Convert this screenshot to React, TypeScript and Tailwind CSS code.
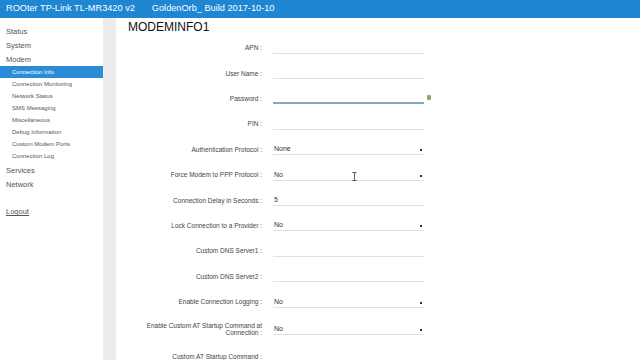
import React from "react";

type Row = { label: string; sub?: string; kind: "input" | "select" | "password"; value?: string; tall?: boolean };

const rows: Row[] = [
  { label: "APN :", kind: "input" },
  { label: "User Name :", kind: "input" },
  { label: "Password :", kind: "password" },
  { label: "PIN :", kind: "input" },
  { label: "Authentication Protocol :", kind: "select", value: "None" },
  { label: "Force Modem to PPP Protocol :", kind: "select", value: "No" },
  { label: "Connection Delay in Seconds :", kind: "input", value: "5" },
  { label: "Lock Connection to a Provider :", kind: "select", value: "No" },
  { label: "Custom DNS Server1 :", kind: "input" },
  { label: "Custom DNS Server2 :", kind: "input" },
  { label: "Enable Connection Logging :", kind: "select", value: "No" },
  { label: "Enable Custom AT Startup Command at", sub: "Connection :", kind: "select", value: "No", tall: true },
  { label: "Custom AT Startup Command :", kind: "input" },
];

const subs = [
  "Connection Info",
  "Connection Monitoring",
  "Network Status",
  "SMS Messaging",
  "Miscellaneous",
  "Debug Information",
  "Custom Modem Ports",
  "Connection Log",
];

export default function App() {
  return (
    <div
      className="w-[640px] h-[360px] overflow-hidden bg-white flex flex-col relative"
      style={{ fontFamily: '"Liberation Sans", Arial, sans-serif' }}
    >
      <div className="h-[18px] shrink-0 bg-[#1f86d4] flex items-center text-white text-[9.2px] pl-[6px]">
        <span>ROOter TP-Link TL-MR3420 v2</span>
        <span className="ml-[17px]">GoldenOrb_ Build 2017-10-10</span>
      </div>
      <div className="flex flex-1 min-h-0">
        <div className="w-[103px] shrink-0 pt-[7px] text-[#555]">
          <div className="h-[14px] flex items-center pl-[6px] text-[7.5px]">Status</div>
          <div className="h-[14px] flex items-center pl-[6px] text-[7.5px]">System</div>
          <div className="h-[13px] flex items-center pl-[6px] text-[7.5px]">Modem</div>
          {subs.map((t, i) => (
            <div
              key={t}
              className={
                "h-[12px] flex items-center pl-[12px] text-[6px] " +
                (i === 0 ? "bg-[#2a8bd6] text-white" : "text-[#555]")
              }
            >
              {t}
            </div>
          ))}
          <div className="h-[14px] mt-[2px] flex items-center pl-[6px] text-[7.5px]">Services</div>
          <div className="h-[14px] flex items-center pl-[6px] text-[7.5px]">Network</div>
          <div className="h-[14px] mt-[13px] flex items-center pl-[6px] text-[7.5px] underline">Logout</div>
        </div>
        <div className="w-[13px] shrink-0 bg-[#ececec]" />
        <div className="flex-1 flex flex-col min-h-0">
          <div className="h-[17px] shrink-0 pl-[12px] text-[12px] leading-[16px] text-[#111] pt-[1px]">MODEMINFO1</div>
          {rows.map((r) => (
            <div key={r.label} className={"flex items-center shrink-0 " + (r.tall ? "h-[30px]" : "h-[25.4px]")}>
              <div className="w-[146px] text-right text-[6.5px] leading-[7px] text-[#444] shrink-0">
                <div>{r.label}</div>
                {r.sub && <div>{r.sub}</div>}
              </div>
              <div className="ml-[11px] w-[151px] h-[12px] relative">
                <div
                  className={
                    "absolute left-0 right-0 bottom-0 " +
                    (r.kind === "password" ? "h-[2px] bg-[#7fa9c9]" : "h-px bg-[#e0e0e0]")
                  }
                />
                {r.value && (
                  <span className="absolute left-[1px] top-[1px] text-[7px] text-[#333]">{r.value}</span>
                )}
                {r.kind === "select" && (
                  <span className="absolute right-[2px] top-[6px] w-[2px] h-[2px] bg-[#333]" />
                )}
                {r.kind === "password" && (
                  <span className="absolute -right-[7px] top-[3px] w-[4px] h-[5px] bg-[#93a86a] rounded-[1px]" />
                )}
              </div>
            </div>
          ))}
        </div>
      </div>
      <svg className="absolute left-[352px] top-[172px]" width="5" height="9" viewBox="0 0 5 9">
        <path d="M0.5 0.5h4M2.5 0.5v8M0.5 8.5h4" stroke="#333" strokeWidth="0.8" fill="none" />
      </svg>
    </div>
  );
}
